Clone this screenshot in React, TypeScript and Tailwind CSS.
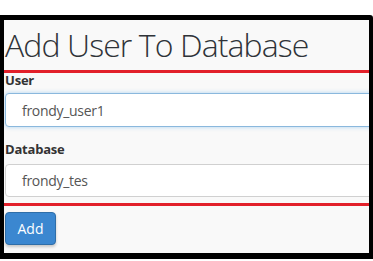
export default function App() {
  return (
    <div className="w-[373px] h-[261px] bg-white pt-[15px] font-['Open_Sans',sans-serif]">
      <div className="h-[244px] border-[4px] border-t-[5px] border-b-[6px] border-black rounded-tr-[3px] bg-[#f9f9f9] overflow-hidden">
        <h1 className="pl-[1px] h-[50px] text-[32px] leading-[50px] font-light text-[#2f3338] tracking-[-0.9px]">Add User To Database</h1>
        <div className="h-[3px] bg-[#e2202a]" />
        <div className="pl-[1px]">
          <label className="block text-[13px] font-bold text-[#333] leading-[14px] tracking-[-0.2px]">User</label>
          <div className="w-[400px] h-[34px] mt-[6px] rounded-[4px] border border-[#8ab8dd] bg-white shadow-[0_0_4px_rgba(102,175,233,0.5)] flex items-center pl-4 text-[14px] text-[#555] tracking-[-0.3px]">
            frondy_user1
          </div>
          <label className="block text-[13px] font-bold text-[#333] leading-[14px] mt-[15px] tracking-[-0.2px]">Database</label>
          <div className="w-[400px] h-[33px] mt-[8px] rounded-[4px] border border-[#d0d0d0] bg-white flex items-center pl-4 text-[14px] text-[#555] tracking-[-0.3px]">
            frondy_tes
          </div>
        </div>
        <div className="h-[3px] bg-[#e2202a] mt-[6px]" />
        <div className="pl-[1px] pt-[6px]">
          <button className="w-[51px] h-[33px] rounded-[4px] bg-[#3b87d0] border border-[#2f6ea8] text-white text-[14px] shadow-[0_2px_3px_rgba(0,0,0,0.2)]">
            Add
          </button>
        </div>
      </div>
    </div>
  );
}
